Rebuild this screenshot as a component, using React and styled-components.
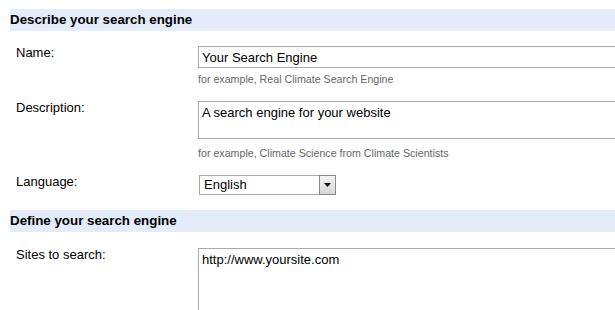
import React from "react";
import styled, { createGlobalStyle } from "styled-components";

const GlobalStyle = createGlobalStyle`
  html, body {
    margin: 0;
    padding: 0;
    overflow: hidden;
    background: #ffffff;
  }
  body {
    font-family: "Liberation Sans", Arial, sans-serif;
    color: #000000;
  }
`;

const Page = styled.div`
  box-sizing: border-box;
  width: 615px;
  height: 310px;
  padding: 9px 0 0 10px;
  overflow: hidden;
`;

const SectionHeader = styled.h2`
  margin: 0;
  height: 22px;
  line-height: 22px;
  background: #e5ecf9;
  font-size: 13.33px;
  font-weight: 700;
  color: #000000;
  white-space: nowrap;
`;

const Row = styled.div`
  display: grid;
  grid-template-columns: 188px 1fr;
  margin-top: ${(p) => p.$top || 15}px;
  margin-bottom: ${(p) => p.$bottom || 0}px;
`;

const Label = styled.label`
  padding-left: 6px;
  margin-top: -1px;
  font-size: 13px;
  line-height: 15px;
  color: #000000;
  white-space: nowrap;
`;

const Field = styled.div`
  display: flex;
  flex-direction: column;
  align-items: stretch;
  min-width: 0;
`;

/* fields run on past the right edge of the shot, so no right border */
const TextInput = styled.input`
  box-sizing: border-box;
  width: 100%;
  height: 22px;
  margin: 0;
  padding: 0 3px;
  border: 1px solid #aaaaaa;
  border-right: none;
  font-family: "Liberation Sans", Arial, sans-serif;
  font-size: 13px;
  color: #000000;
  outline: none;
`;

const TextArea = styled.textarea`
  display: block;
  box-sizing: border-box;
  width: 100%;
  height: ${(p) => p.$height}px;
  margin: 0;
  padding: 3px 3px;
  border: 1px solid #aaaaaa;
  border-right: none;
  ${(p) => p.$open && "border-bottom: none;"}
  font-family: "Liberation Sans", Arial, sans-serif;
  font-size: 13px;
  line-height: 15px;
  color: #000000;
  resize: none;
  overflow: hidden;
  outline: none;
`;

const Hint = styled.div`
  margin-top: ${(p) => p.$gap}px;
  font-size: 8pt;
  line-height: 14px;
  color: #676767;
  white-space: nowrap;
`;

const Select = styled.div`
  box-sizing: border-box;
  display: flex;
  align-items: stretch;
  width: 137px;
  height: 20px;
  margin-left: 1px;
  border: 1px solid #aaaaaa;
  background: #ffffff;
`;

const SelectValue = styled.span`
  flex: 1;
  padding-left: 4px;
  font-size: 13px;
  line-height: 18px;
  color: #000000;
`;

const SelectButton = styled.span`
  box-sizing: border-box;
  display: flex;
  align-items: center;
  justify-content: center;
  width: 17px;
  margin: -1px -1px -1px 0;
  border: 1px solid #8a8a8a;
  background: linear-gradient(#f4f4f4, #d6d6d6);
`;

function ArrowDown() {
  return (
    <svg width="7" height="4" viewBox="0 0 7 4">
      <path d="M0 0h7L3.5 4z" fill="#000" />
    </svg>
  );
}

export default function App() {
  return (
    <Page>
      <GlobalStyle />
      <SectionHeader>Describe your search engine</SectionHeader>

      <Row>
        <Label>Name:</Label>
        <Field>
          <TextInput defaultValue="Your Search Engine" />
          <Hint $gap={4}>for example, Real Climate Search Engine</Hint>
        </Field>
      </Row>

      <Row>
        <Label>Description:</Label>
        <Field>
          <TextArea $height={38} defaultValue="A search engine for your website" />
          <Hint $gap={7}>for example, Climate Science from Climate Scientists</Hint>
        </Field>
      </Row>

      <Row $bottom={15}>
        <Label>Language:</Label>
        <Field>
          <Select>
            <SelectValue>English</SelectValue>
            <SelectButton>
              <ArrowDown />
            </SelectButton>
          </Select>
        </Field>
      </Row>

      <SectionHeader>Define your search engine</SectionHeader>

      <Row $top={16}>
        <Label>Sites to search:</Label>
        <Field>
          <TextArea $open $height={62} defaultValue="http://www.yoursite.com" />
        </Field>
      </Row>
    </Page>
  );
}
